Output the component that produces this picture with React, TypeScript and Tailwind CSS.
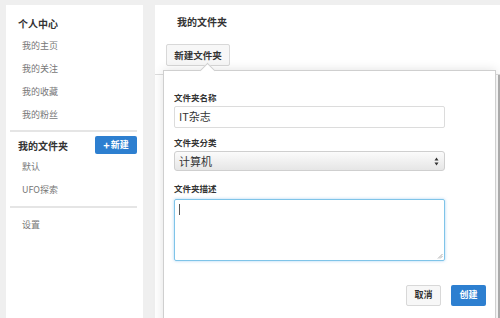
import React from 'react';

const font = { fontFamily: '"Noto Sans CJK SC", "Liberation Sans", sans-serif' };

function SideItem({ children }: { children: React.ReactNode }) {
  return <div className="h-[23px] flex items-center pl-[12px] text-[9px] text-[#777]">{children}</div>;
}

export default function App() {
  return (
    <div
      className="w-[500px] h-[318px] bg-[#efefef] flex pt-[5px] pl-[6px] gap-[12px] overflow-hidden"
      style={font}
    >
      {/* ── Sidebar ── */}
      <div className="w-[137px] bg-white flex flex-col pl-[4px] pr-[6px] pt-[11px]">
        <div className="h-[14px] flex items-center pl-[8px] text-[10px] font-bold text-[#333]">个人中心</div>
        <div className="mt-[4px]">
          <SideItem>我的主页</SideItem>
          <SideItem>我的关注</SideItem>
          <SideItem>我的收藏</SideItem>
          <SideItem>我的粉丝</SideItem>
        </div>
        <div className="h-[2px] bg-[#e5e5e5] mt-[4px]" />
        <div className="flex items-center justify-between pl-[8px] mt-[4px] h-[18px]">
          <span className="text-[10px] font-bold text-[#333]">我的文件夹</span>
          <span className="bg-[#2d7fd0] text-white text-[9px] font-bold h-[18px] w-[42px] flex items-center justify-center rounded-[2px]">
            <span className="text-[11px] mr-[1px] leading-none">+</span>新建
          </span>
        </div>
        <div className="mt-[1px]">
          <SideItem>默认</SideItem>
          <SideItem>UFO探索</SideItem>
        </div>
        <div className="h-[2px] bg-[#e5e5e5] mt-[5px]" />
        <div className="mt-[5px]">
          <SideItem>设置</SideItem>
        </div>
      </div>

      {/* ── Main ── */}
      <div className="flex-1 bg-white relative flex flex-col">
        <div className="pl-[22px] pt-[6px] h-[26px] flex items-center text-[10px] font-bold text-[#333]">我的文件夹</div>
        <div className="pl-[11px] mt-[9px]">
          <span className="inline-flex items-center justify-center w-[64px] h-[22px] border border-[#d8d8d8] bg-[#f7f7f7] rounded-[2px] text-[9.5px] font-bold text-[#333]">
            新建文件夹
          </span>
        </div>
        <div className="h-[1px] bg-[#dcdcdc] mt-[8px]" />

        {/* Popover */}
        <div className="absolute left-[8px] right-[4px] top-[65px] h-[270px] bg-white border border-[#cfcfcf] shadow-[0_0_10px_rgba(0,0,0,0.12)]">
          <div className="absolute -top-[6px] left-[38px] w-[11px] h-[11px] bg-white border-l border-t border-[#cfcfcf] rotate-45" />
          <div className="relative pl-[10px] pt-[22px] w-[281px]">
            <div className="text-[8.5px] font-bold text-[#333] leading-none">文件夹名称</div>
            <div className="mt-[4px] h-[22px] border border-[#dcdcdc] rounded-[2px] flex items-center pl-[4px] text-[11px] text-[#333]">
              IT杂志
            </div>
            <div className="mt-[10px] text-[8.5px] font-bold text-[#333] leading-none">文件夹分类</div>
            <div className="mt-[5px] h-[20px] border border-[#cfcfcf] rounded-[3px] flex items-center justify-between pl-[4px] pr-[5px] text-[11px] text-[#333] bg-[linear-gradient(#fbfbfb,#e6e6e6)]">
              <span>计算机</span>
              <svg width="5" height="9" viewBox="0 0 5 9">
                <path d="M0.5 3.5 L2.5 0.5 L4.5 3.5 Z M0.5 5.5 L2.5 8.5 L4.5 5.5 Z" fill="#333" />
              </svg>
            </div>
            <div className="mt-[13px] text-[8.5px] font-bold text-[#333] leading-none">文件夹描述</div>
            <div className="mt-[6px] h-[62px] border border-[#7fc4e8] rounded-[2px] shadow-[0_0_3px_rgba(82,168,236,0.5)] relative">
              <div className="absolute left-[4px] top-[4px] w-[1px] h-[11px] bg-[#555]" />
              <svg className="absolute right-[1px] bottom-[1px]" width="6" height="6" viewBox="0 0 6 6">
                <path d="M1 5.5 L5.5 1 M3 5.5 L5.5 3" stroke="#999" strokeWidth="0.8" />
              </svg>
            </div>
          </div>
          <div className="flex justify-end gap-[10px] pr-[9px] mt-[24px]">
            <span className="w-[35px] h-[21px] border border-[#d8d8d8] bg-[#f7f7f7] rounded-[2px] flex items-center justify-center text-[9px] font-bold text-[#333]">取消</span>
            <span className="w-[35px] h-[21px] bg-[#2d7fd0] rounded-[2px] flex items-center justify-center text-[9px] font-bold text-white">创建</span>
          </div>
        </div>
        <div className="absolute right-0 top-[70px] bottom-0 w-[2px] bg-[#aaa]" />
      </div>
    </div>
  );
}
